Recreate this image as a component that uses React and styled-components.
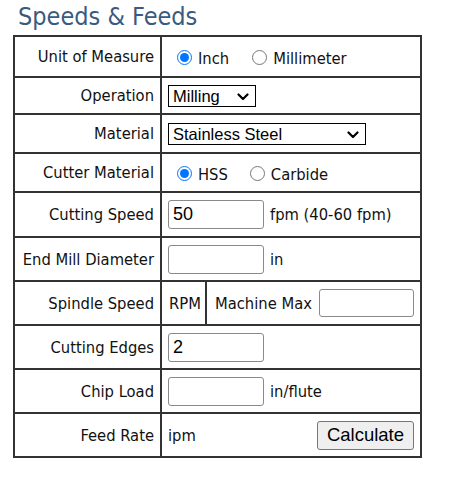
import React from "react";
import styled, { createGlobalStyle } from "styled-components";

const Global = createGlobalStyle`
  html, body { margin: 0; padding: 0; background: #fff; }
  body { font-family: "DejaVu Sans Condensed", "DejaVu Sans", Verdana, sans-serif; color: #111; }
`;

const Page = styled.div`
  padding: 0 0 0 13px;
`;

const Title = styled.h1`
  margin: 0;
  padding-left: 5px;
  height: 35px;
  line-height: 33px;
  font-size: 25px;
  font-weight: normal;
  color: #3a5a80;
`;

const Table = styled.div`
  width: 409px;
  box-sizing: border-box;
  border: 2px solid #333;
`;

const Row = styled.div`
  display: grid;
  grid-template-columns: 147px 1fr;
  height: ${(p) => p.$h}px;
  box-sizing: border-box;
  border-top: ${(p) => (p.$first ? "none" : "2px solid #333")};
`;

const Label = styled.div`
  display: flex;
  align-items: center;
  justify-content: flex-end;
  padding-right: 6px;
  border-right: 2px solid #333;
  font-size: 16.4px;
  white-space: nowrap;
`;

const Content = styled.div`
  display: flex;
  align-items: center;
  padding: 0 6px 0 6px;
  font-size: 16.4px;
  white-space: nowrap;
  justify-content: ${(p) => (p.$spread ? "space-between" : "flex-start")};
`;

const Split = styled.div`
  display: flex;
  align-items: stretch;
`;

const RpmCell = styled.div`
  display: flex;
  align-items: center;
  width: 36px;
  padding-left: 7px;
  border-right: 2px solid #333;
  font-size: 16.4px;
  white-space: nowrap;
`;

const MaxCell = styled.div`
  flex: 1;
  display: flex;
  align-items: center;
  padding: 0 6px 0 8px;
  font-size: 16.4px;
  white-space: nowrap;
`;

const RadioLabel = styled.label`
  display: inline-flex;
  align-items: center;
  margin-right: ${(p) => p.$mr || 0}px;
  padding-top: 3px;
`;

const Radio = styled.input.attrs({ type: "radio" })`
  width: 15px;
  height: 15px;
  margin: 0 6px 0 9px;
  accent-color: #0075ff;
  position: relative;
  top: -1px;
`;

const SelectWrap = styled.div`
  position: relative;
  display: inline-block;
  width: ${(p) => p.$w}px;
  height: 22px;
`;

const Select = styled.select`
  appearance: none;
  -webkit-appearance: none;
  width: 100%;
  height: 100%;
  box-sizing: border-box;
  border: 1px solid #000;
  border-radius: 0;
  background: #fff;
  color: #000;
  font-family: "Liberation Sans", Arial, sans-serif;
  font-size: 16.5px;
  padding: 0 20px 0 4px;
  outline: none;
`;

const Chevron = styled.svg`
  position: absolute;
  right: 7px;
  top: 8px;
  width: 12px;
  height: 8px;
  pointer-events: none;
`;

const TextInput = styled.input.attrs({ type: "text" })`
  width: ${(p) => p.$w || 96}px;
  height: ${(p) => p.$h || 29}px;
  box-sizing: border-box;
  border: 1px solid #8a8a8a;
  border-radius: 3px;
  padding: 0 4px;
  margin-left: ${(p) => (p.$push ? "auto" : "0")};
  margin-right: ${(p) => p.$mr || 0}px;
  font-family: "Liberation Sans", Arial, sans-serif;
  font-size: 18px;
  color: #000;
  background: #fff;
`;

const Button = styled.button`
  width: 97px;
  height: 29px;
  box-sizing: border-box;
  border: 1px solid #767676;
  border-radius: 3px;
  background: #efefef;
  font-family: "Liberation Sans", Arial, sans-serif;
  font-size: 18.5px;
  color: #000;
  padding: 0;
`;

function Dropdown({ width, value, options }) {
  return (
    <SelectWrap $w={width}>
      <Select defaultValue={value}>
        {options.map((o) => (
          <option key={o}>{o}</option>
        ))}
      </Select>
      <Chevron viewBox="0 0 12 8">
        <polyline
          points="1.5,1.5 6,6 10.5,1.5"
          fill="none"
          stroke="#000"
          strokeWidth="2.2"
          strokeLinecap="round"
          strokeLinejoin="round"
        />
      </Chevron>
    </SelectWrap>
  );
}

export default function App() {
  return (
    <Page>
      <Global />
      <Title>Speeds &amp; Feeds</Title>
      <Table>
        <Row $h={39} $first>
          <Label>Unit of Measure</Label>
          <Content>
            <RadioLabel $mr={14}>
              <Radio name="unit" defaultChecked />
              Inch
            </RadioLabel>
            <RadioLabel>
              <Radio name="unit" />
              Millimeter
            </RadioLabel>
          </Content>
        </Row>
        <Row $h={37}>
          <Label>Operation</Label>
          <Content>
            <Dropdown width={88} value="Milling" options={["Milling", "Drilling"]} />
          </Content>
        </Row>
        <Row $h={39}>
          <Label>Material</Label>
          <Content>
            <Dropdown
              width={198}
              value="Stainless Steel"
              options={["Stainless Steel", "Aluminum", "Mild Steel"]}
            />
          </Content>
        </Row>
        <Row $h={39}>
          <Label>Cutter Material</Label>
          <Content>
            <RadioLabel $mr={13}>
              <Radio name="cutter" defaultChecked />
              HSS
            </RadioLabel>
            <RadioLabel>
              <Radio name="cutter" />
              Carbide
            </RadioLabel>
          </Content>
        </Row>
        <Row $h={45}>
          <Label>Cutting Speed</Label>
          <Content>
            <TextInput defaultValue="50" $mr={6} />
            fpm (40-60 fpm)
          </Content>
        </Row>
        <Row $h={44}>
          <Label>End Mill Diameter</Label>
          <Content>
            <TextInput $mr={6} />
            in
          </Content>
        </Row>
        <Row $h={44}>
          <Label>Spindle Speed</Label>
          <Split>
            <RpmCell>RPM</RpmCell>
            <MaxCell>
              Machine Max
              <TextInput $push $h={28} $w={95} />
            </MaxCell>
          </Split>
        </Row>
        <Row $h={44}>
          <Label>Cutting Edges</Label>
          <Content>
            <TextInput defaultValue="2" />
          </Content>
        </Row>
        <Row $h={44}>
          <Label>Chip Load</Label>
          <Content>
            <TextInput $mr={6} />
            in/flute
          </Content>
        </Row>
        <Row $h={44}>
          <Label>Feed Rate</Label>
          <Content $spread>
            <span>ipm</span>
            <Button>Calculate</Button>
          </Content>
        </Row>
      </Table>
    </Page>
  );
}
